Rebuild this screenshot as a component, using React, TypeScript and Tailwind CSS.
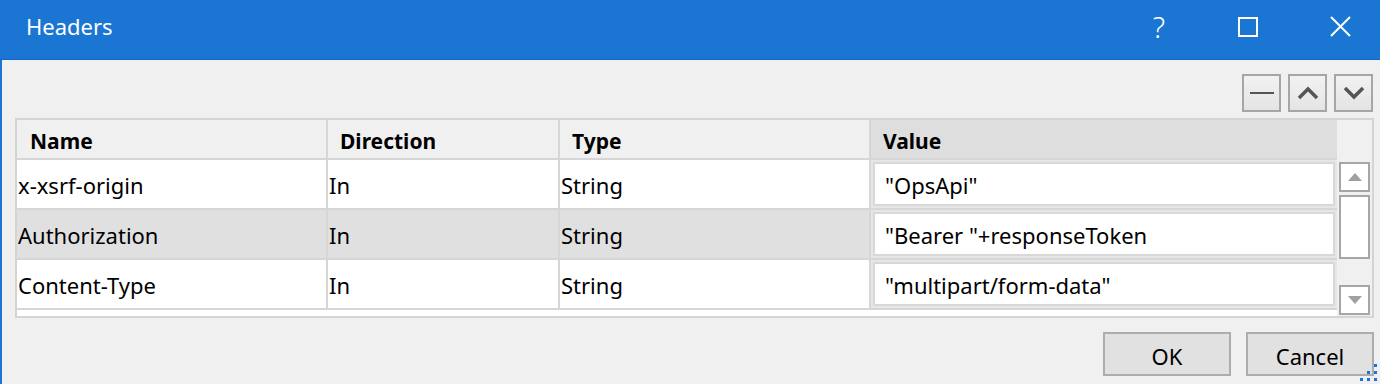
import { useState } from 'react';

type Header = {
  name: string;
  direction: string;
  type: string;
  value: string;
};

const HEADERS: Header[] = [
  { name: 'x-xsrf-origin', direction: 'In', type: 'String', value: '"OpsApi"' },
  { name: 'Authorization', direction: 'In', type: 'String', value: '"Bearer "+responseToken' },
  { name: 'Content-Type', direction: 'In', type: 'String', value: '"multipart/form-data"' },
];

const FONT = '"Noto Sans", "Open Sans", sans-serif';

function ToolButton({ children }: { children: React.ReactNode }) {
  return (
    <button className="w-[39px] h-[38px] border-2 border-[#a6a6a6] bg-gradient-to-b from-[#f2f2f2] to-[#e4e4e4] flex items-center justify-center text-[#555]">
      {children}
    </button>
  );
}

export default function App() {
  const [selected, setSelected] = useState(1);

  return (
    <div className="relative w-[1380px] h-[384px] bg-[#f0f0f0] overflow-hidden flex flex-col" style={{ fontFamily: FONT }}>
      {/* Title bar */}
      <div className="h-[60px] bg-[#1a76d2] border-b border-[#1565c0] flex items-center text-white shrink-0">
        <span className="pl-[26px] pb-[7px] text-[22px] leading-none">Headers</span>
        <div className="ml-auto flex items-center pr-[29px] pb-[6px]">
          <span className="text-[29px] leading-none font-light">?</span>
          <div className="ml-[73px] w-[20px] h-[20px] border-2 border-white" />
          <svg className="ml-[72px]" width="21" height="21" viewBox="0 0 21 21" stroke="white" strokeWidth="2">
            <path d="M1 1L20 20M20 1L1 20" />
          </svg>
        </div>
      </div>

      {/* Body */}
      <div className="flex-1 border-l-2 border-[#1a76d2] flex flex-col">
        <div className="flex justify-end gap-[7px] pr-[7px] pt-[14px] pb-[6px]">
          <ToolButton>
            <svg width="24" height="4" viewBox="0 0 24 4">
              <rect x="0" y="1" width="24" height="2" fill="#555" />
            </svg>
          </ToolButton>
          <ToolButton>
            <svg width="22" height="14" viewBox="0 0 22 14" fill="none" stroke="#555" strokeWidth="3.5">
              <path d="M2 12L11 3L20 12" />
            </svg>
          </ToolButton>
          <ToolButton>
            <svg width="22" height="14" viewBox="0 0 22 14" fill="none" stroke="#555" strokeWidth="3.5">
              <path d="M2 2L11 11L20 2" />
            </svg>
          </ToolButton>
        </div>

        {/* Grid */}
        <div className="ml-[13px] mr-[6px] h-[200px] border-2 border-[#d4d4d4] bg-white flex">
          <div className="flex-1 flex flex-col">
            <div className="h-[40px] flex bg-[#f0f0f0] border-b-2 border-[#d6d6d6] text-[21px] font-bold text-black">
              <div className="w-[311px] border-r-2 border-[#d6d6d6] pl-[13px] pt-[5px] flex items-center">Name</div>
              <div className="w-[232px] border-r-2 border-[#d6d6d6] pl-[12px] pt-[5px] flex items-center">Direction</div>
              <div className="w-[311px] border-r-2 border-[#d6d6d6] pl-[12px] pt-[5px] flex items-center">Type</div>
              <div className="flex-1 bg-[#dedede] pl-[12px] pt-[5px] flex items-center">Value</div>
            </div>
            {HEADERS.map((h, i) => (
              <div
                key={h.name}
                onClick={() => setSelected(i)}
                className={`h-[50px] flex border-b-2 border-[#d6d6d6] text-[22px] text-black ${
                  selected === i ? 'bg-[#e0e0e0]' : 'bg-white'
                }`}
              >
                <div className="w-[311px] border-r-2 border-[#d6d6d6] pl-[1px] pt-[3px] flex items-center">{h.name}</div>
                <div className="w-[232px] border-r-2 border-[#d6d6d6] pl-[1px] pt-[3px] flex items-center">{h.direction}</div>
                <div className="w-[311px] border-r-2 border-[#d6d6d6] pl-[1px] pt-[3px] flex items-center">{h.type}</div>
                <div className="flex-1 bg-[#e6e6e6] p-[2px] flex">
                  <div className="flex-1 bg-white border-2 border-[#d8d8d8] pl-[10px] pt-[2px] flex items-center">{h.value}</div>
                </div>
              </div>
            ))}
          </div>
          {/* Scrollbar */}
          <div className="w-[35px] bg-[#f0f0f0] flex flex-col pt-[40px]">
            <div className="flex-1 flex flex-col px-[2px] pt-[2px] pb-[1px]">
              <div className="h-[30px] border-2 border-[#a6a6a6] bg-white flex items-center justify-center">
                <svg width="14" height="8" viewBox="0 0 14 8">
                  <path d="M0 8L7 0L14 8Z" fill="#a0a0a0" />
                </svg>
              </div>
              <div className="h-[64px] mt-[3px] border-2 border-[#a6a6a6] bg-white" />
              <div className="flex-1" />
              <div className="h-[30px] border-2 border-[#a6a6a6] bg-white flex items-center justify-center">
                <svg width="14" height="8" viewBox="0 0 14 8">
                  <path d="M0 0L7 8L14 0Z" fill="#a0a0a0" />
                </svg>
              </div>
            </div>
          </div>
        </div>

        {/* Footer buttons */}
        <div className="flex justify-end gap-[15px] pr-[6px] pt-[14px]">
          <button className="w-[128px] h-[44px] pt-[3px] border-2 border-[#adadad] bg-[#e1e1e1] text-[22px] text-black leading-none">
            OK
          </button>
          <button className="w-[128px] h-[44px] pt-[3px] border-2 border-[#adadad] bg-[#e1e1e1] text-[22px] text-black leading-none">
            Cancel
          </button>
        </div>
      </div>

      {/* resize grip */}
      <svg className="absolute right-[2px] bottom-0" width="20" height="22" viewBox="0 0 20 22" fill="#1a76d2">
        <rect x="16" y="2" width="3" height="3" />
        <rect x="9" y="9" width="3" height="3" />
        <rect x="16" y="9" width="3" height="3" />
        <rect x="2" y="16" width="3" height="3" />
        <rect x="9" y="16" width="3" height="3" />
        <rect x="16" y="16" width="3" height="3" />
      </svg>
    </div>
  );
}
